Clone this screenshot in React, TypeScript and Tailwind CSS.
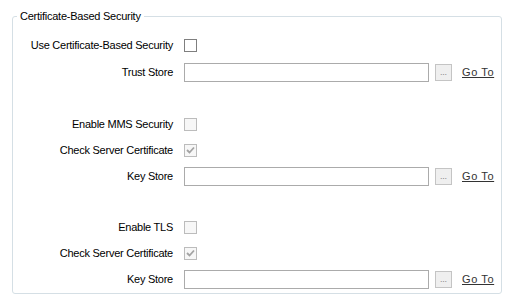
import React from "react";

type Row =
  | { kind: "check"; label: string; checked?: boolean; disabled?: boolean; h: string }
  | { kind: "file"; label: string; h: string }
  | { kind: "gap"; h: string };

const rows: Row[] = [
  { kind: "check", label: "Use Certificate-Based Security", h: "h-[27px]" },
  { kind: "file", label: "Trust Store", h: "h-[26px]" },
  { kind: "gap", h: "h-[26px]" },
  { kind: "check", label: "Enable MMS Security", disabled: true, h: "h-[26px]" },
  { kind: "check", label: "Check Server Certificate", checked: true, disabled: true, h: "h-[26px]" },
  { kind: "file", label: "Key Store", h: "h-[26px]" },
  { kind: "gap", h: "h-[25px]" },
  { kind: "check", label: "Enable TLS", disabled: true, h: "h-[26px]" },
  { kind: "check", label: "Check Server Certificate", checked: true, disabled: true, h: "h-[26px]" },
  { kind: "file", label: "Key Store", h: "h-[26px]" },
];

function CheckBox({ checked, disabled }: { checked?: boolean; disabled?: boolean }) {
  return (
    <div
      className={
        "w-[13px] h-[13px] border flex items-center justify-center " +
        (disabled ? "border-[#bcbcbc] bg-[#f7f7f7]" : "border-[#7f7f7f] bg-white")
      }
    >
      {checked && (
        <svg width="9" height="8" viewBox="0 0 9 8">
          <path d="M1 4 L3.5 6.5 L8 1.5" fill="none" stroke="#a3a3a3" strokeWidth="1.8" />
        </svg>
      )}
    </div>
  );
}

function FileRow() {
  return (
    <div className="flex items-center">
      <div className="w-[245px] h-[19px] border border-[#ababab] bg-white" />
      <button className="ml-[6px] w-[17px] h-[17px] border border-[#c4c4c4] bg-[#efefef] text-[9px] leading-none text-[#8a8a8a] flex items-end justify-center pb-[3px]">
        ...
      </button>
      <span className="ml-[10px] text-[#333] underline tracking-[0.6px] text-[11px]">Go To</span>
    </div>
  );
}

export default function App() {
  return (
    <div
      className="w-[512px] h-[299px] bg-white text-[11px] text-black pt-[10px] tracking-[-0.25px]"
      style={{ fontFamily: "'Liberation Sans', Arial, sans-serif" }}
    >
      <fieldset className="ml-[12px] w-[490px] h-[284px] border border-[#d5dfe5] rounded-[3px]">
        <legend className="ml-[4px] px-[3px] leading-[12px] text-[11px] text-black">
          Certificate-Based Security
        </legend>
        <div className="pt-[10px]">
          {rows.map((r, i) =>
            r.kind === "gap" ? (
              <div key={i} className={r.h} />
            ) : (
              <div key={i} className={"grid grid-cols-[160px_1fr] gap-x-[11px] items-center " + r.h}>
                <div className="text-right whitespace-nowrap">{r.label}</div>
                {r.kind === "check" ? (
                  <CheckBox checked={r.checked} disabled={r.disabled} />
                ) : (
                  <FileRow />
                )}
              </div>
            )
          )}
        </div>
      </fieldset>
    </div>
  );
}
